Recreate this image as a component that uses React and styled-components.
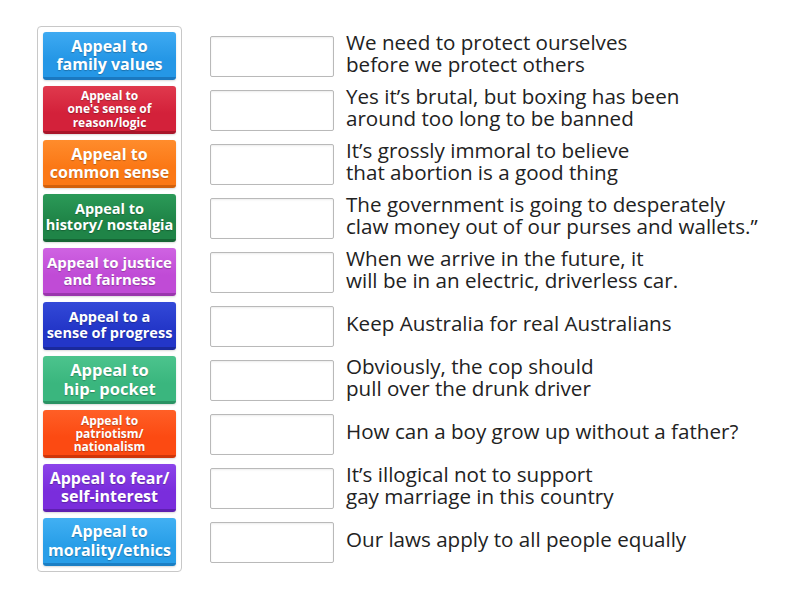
import React from "react";
import styled, { createGlobalStyle } from "styled-components";

const Global = createGlobalStyle`
  html, body { margin: 0; padding: 0; background: #fff; }
  body { font-family: "Open Sans", "Liberation Sans", sans-serif; }
`;

const Page = styled.div`
  display: flex;
  align-items: flex-start;
  padding: 26px 0 0 37px;
  width: 800px;
  height: 600px;
  box-sizing: border-box;
`;

const TileBox = styled.div`
  display: flex;
  flex-direction: column;
  gap: 6px;
  padding: 5px;
  border: 1px solid #c8c8c8;
  border-radius: 4px;
  width: 133px;
`;

const Tile = styled.div`
  height: 48px;
  box-sizing: border-box;
  border-radius: 3px;
  display: flex;
  align-items: center;
  justify-content: center;
  text-align: center;
  color: #fff;
  font-family: "Open Sans", sans-serif;
  font-weight: 700;
  font-size: ${(p) => p.$size}px;
  line-height: ${(p) => p.$lh}px;
  background: linear-gradient(${(p) => p.$light}, ${(p) => p.$color} 60%);
  border-bottom: 3px solid ${(p) => p.$dark};
  padding-top: 1px;
  text-shadow: 0 1px 1px rgba(0, 0, 0, 0.25);
  box-shadow: 0 1px 2px rgba(0, 0, 0, 0.15);
  overflow: hidden;
`;

const TileText = styled.span`
  white-space: pre;
`;

const Rows = styled.div`
  display: flex;
  flex-direction: column;
  margin-left: 28px;
  padding-top: 3px;
`;

const Row = styled.div`
  height: 54px;
  display: flex;
  align-items: center;
`;

const Slot = styled.div`
  width: 124px;
  height: 41px;
  box-sizing: border-box;
  border: 1px solid #b9b9b9;
  border-radius: 2px;
  background: #fff;
  box-shadow: inset 0 1px 2px rgba(0, 0, 0, 0.08);
  flex: none;
`;

const Statement = styled.div`
  margin-left: 12px;
  font-family: "Open Sans", sans-serif;
  font-size: 20.6px;
  line-height: 22px;
  color: #222;
  white-space: pre-line;
  margin-top: -7px;
`;

const tiles = [
  { t: "Appeal to\nfamily values", c: "#2597e6", l: "#3eaaf2", d: "#1a78c0", s: 16, lh: 18 },
  { t: "Appeal to\none's sense of\nreason/logic", c: "#d3213a", l: "#e0394d", d: "#a8152a", s: 12, lh: 13.5 },
  { t: "Appeal to\ncommon sense", c: "#fb7816", l: "#ff8c2c", d: "#d2600c", s: 16, lh: 18 },
  { t: "Appeal to\nhistory/ nostalgia", c: "#1f8447", l: "#2b9a58", d: "#166535", s: 14.5, lh: 16 },
  { t: "Appeal to justice\nand fairness", c: "#c04bd6", l: "#cf63e2", d: "#9a36ad", s: 15, lh: 17 },
  { t: "Appeal to a\nsense of progress", c: "#2336c8", l: "#3349d8", d: "#1a299c", s: 14.5, lh: 16 },
  { t: "Appeal to\nhip- pocket", c: "#3ab67e", l: "#4cc48d", d: "#2a9263", s: 16.5, lh: 19 },
  { t: "Appeal to\npatriotism/\nnationalism", c: "#fc4a12", l: "#ff5f26", d: "#cf3509", s: 12, lh: 13 },
  { t: "Appeal to fear/\nself-interest", c: "#7a2ddc", l: "#8c44ea", d: "#5f1fb0", s: 16, lh: 18 },
  { t: "Appeal to\nmorality/ethics", c: "#289ee8", l: "#41b0f3", d: "#1b7fc4", s: 16, lh: 19 },
];

const statements = [
  "We need to protect ourselves\nbefore we protect others",
  "Yes it\u2019s brutal, but boxing has been\naround too long to be banned",
  "It\u2019s grossly immoral to believe\nthat abortion is a good thing",
  "The government is going to desperately\nclaw money out of our purses and wallets.\u201d",
  "When we arrive in the future, it\nwill be in an electric, driverless car.",
  "Keep Australia for real Australians",
  "Obviously, the cop should\npull over the drunk driver",
  "How can a boy grow up without a father?",
  "It\u2019s illogical not to support\ngay marriage in this country",
  "Our laws apply to all people equally",
];

export default function App() {
  return (
    <>
      <Global />
      <Page>
        <TileBox>
          {tiles.map((t, i) => (
            <Tile key={i} $color={t.c} $light={t.l} $dark={t.d} $size={t.s} $lh={t.lh}>
              <TileText>{t.t}</TileText>
            </Tile>
          ))}
        </TileBox>
        <Rows>
          {statements.map((s, i) => (
            <Row key={i}>
              <Slot />
              <Statement>{s}</Statement>
            </Row>
          ))}
        </Rows>
      </Page>
    </>
  );
}
